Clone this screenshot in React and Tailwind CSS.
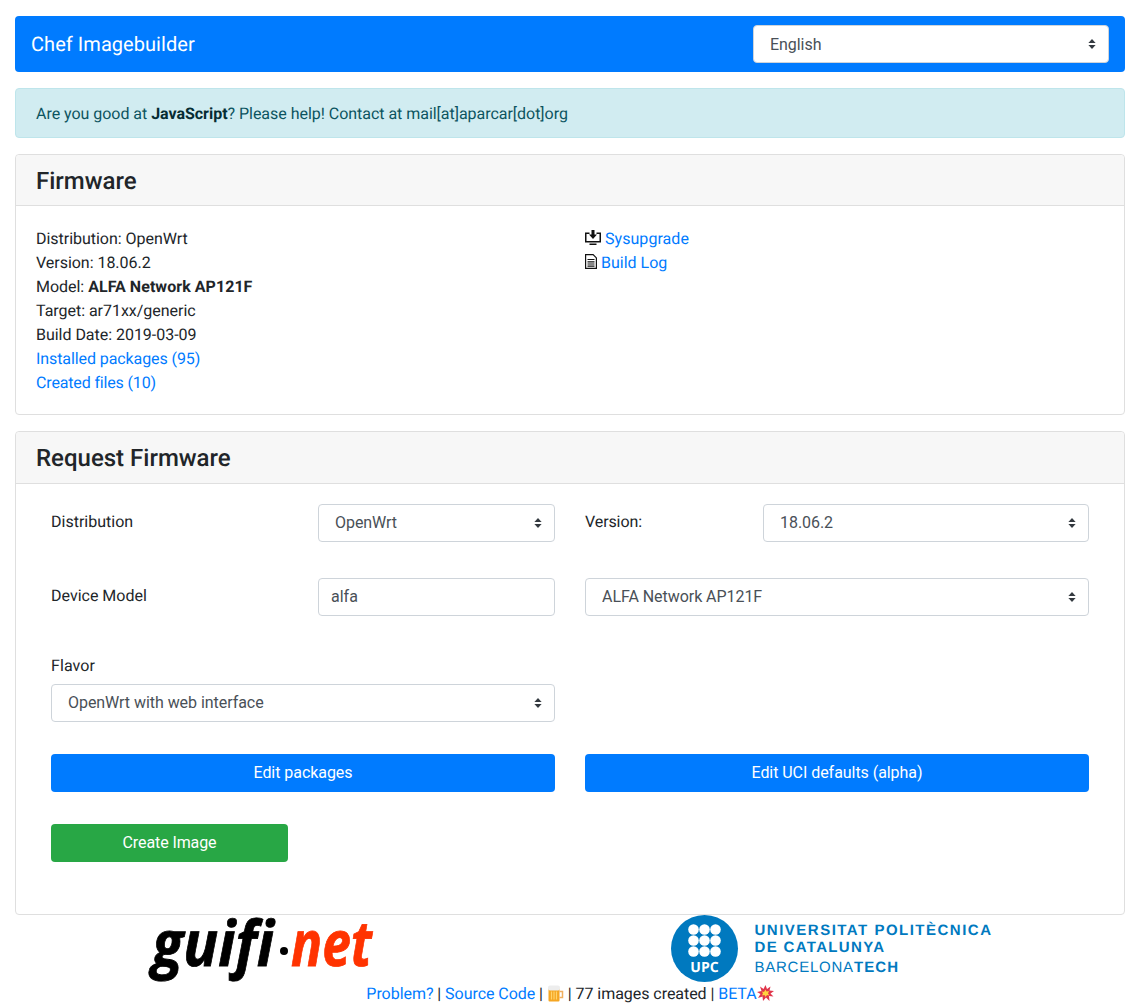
import React from 'react';

const Chevrons = () => (
  <svg width="8" height="10" viewBox="0 0 8 10" className="absolute right-[13px] top-1/2 -translate-y-1/2 pointer-events-none" fill="#343a40">
    <path d="M4 0 L7.6 4 L0.4 4 Z" />
    <path d="M4 10 L7.6 6 L0.4 6 Z" />
  </svg>
);

const Select = ({ value, className = '', selectClass = '' }) => (
  <div className={`relative ${className}`}>
    <select
      defaultValue={value}
      className={`block w-full h-[38px] appearance-none bg-white border border-[#ced4da] rounded pl-4 pr-8 text-base text-[#495057] tracking-[-0.05px] ${selectClass}`}
    >
      <option>{value}</option>
    </select>
    <Chevrons />
  </div>
);

const Card = ({ title, children, className = '', headerClass = 'pb-[9px]' }) => (
  <section className={`border border-[#dfdfdf] rounded ${className}`}>
    <h4 className={`bg-[#f7f7f7] border-b border-[#dfdfdf] rounded-t px-5 pt-3 text-2xl leading-[29px] font-medium text-[#212529] ${headerClass}`}>
      {title}
    </h4>
    {children}
  </section>
);

const SysupgradeIcon = () => (
  <svg width="16" height="15" viewBox="0 0 16 15" className="shrink-0 -mt-1" fill="#111">
    <path d="M6.500 0h3v4.500h2.500L8 9 4 4.500h2.500z" />
    <path d="M0 2.500h4.500V4H1.500v7h13V4h-3V2.500H16V12.500H0z" />
    <path d="M4.500 13.500h7V15h-7z" />
  </svg>
);

const LogIcon = () => (
  <svg width="12" height="15" viewBox="0 0 12 15" className="shrink-0 -mt-1" fill="none" stroke="#111" strokeWidth="1.200">
    <path d="M.6.6h7.500l3.300 3.300v10.500H.6z" />
    <path d="M2.500 5.500h7M2.500 7.800h7M2.500 10h7M2.500 12.200h7" />
  </svg>
);

const GuifiLogo = () => (
  <svg width="232" height="66" viewBox="0 0 232 66" className="shrink-0 overflow-visible">
    <text x="5" y="51" fontFamily="'Open Sans', sans-serif" fontWeight="700" fontStyle="italic" fontSize="63" textLength="122" lengthAdjust="spacingAndGlyphs" fill="#000" stroke="#000" strokeWidth="0.800">guifi</text>
    <circle cx="137" cy="36" r="4" fill="#000" />
    <text x="144" y="51" fontFamily="'Open Sans', sans-serif" fontWeight="700" fontStyle="italic" fontSize="63" textLength="81" lengthAdjust="spacingAndGlyphs" fill="#ff3300" stroke="#ff3300" strokeWidth="0.800">net</text>
  </svg>
);

const UpcLogo = () => {
  const dots = [];
  for (let r = 0; r < 3; r++) {
    for (let c = 0; c < 3; c++) {
      dots.push(<circle key={`${r}-${c}`} cx={22.500 + c * 11} cy={14.500 + r * 11} r="5.300" fill="#fff" />);
    }
  }
  return (
    <svg width="322" height="67" viewBox="0 0 322 67" className="shrink-0">
      <circle cx="33.500" cy="33.500" r="33.500" fill="#0079bf" />
      {dots}
      <text x="33.500" y="57" textAnchor="middle" fontFamily="'Open Sans', sans-serif" fontWeight="700" fontSize="14" fill="#fff">UPC</text>
      <g fontFamily="'Liberation Sans', sans-serif" fill="#0079bf">
        <text x="83.500" y="20" fontWeight="700" fontSize="15" textLength="236.500" lengthAdjust="spacing">UNIVERSITAT POLITÈCNICA</text>
        <text x="83.500" y="37" fontWeight="700" fontSize="15" textLength="129.500" lengthAdjust="spacing">DE CATALUNYA</text>
        <text x="83.500" y="57" fontSize="15" textLength="98.500" lengthAdjust="spacing">BARCELONA</text>
        <text x="183" y="57" fontWeight="700" fontSize="15" textLength="44" lengthAdjust="spacing">TECH</text>
      </g>
    </svg>
  );
};

const BeerIcon = () => (
  <svg width="17" height="17" viewBox="0 0 17 17" className="inline-block align-[-3px]">
    <rect x="1.500" y="3" width="11" height="13.500" rx="1" fill="#f5a623" />
    <path d="M4.500 6.500v8M7 6.500v8M9.500 6.500v8" stroke="#ffd36b" strokeWidth="1.200" />
    <rect x="1" y="0.500" width="12" height="5" rx="2" fill="#ededed" />
    <path d="M12.500 6.500h3v6h-3" fill="none" stroke="#f0b060" strokeWidth="1.500" />
  </svg>
);

const BoomIcon = () => (
  <svg width="17" height="17" viewBox="0 0 17 17" className="inline-block align-[-3px]">
    <path d="M8.500 0l1.500 4 3.500-2.500-1 4 4.500.5-3.500 2.500 3 3-4.500-.5.5 5-3.500-3.500-3 3.500-.5-4.500-4.500 1.500 2.500-4L0 7l4.500-1-1.500-4.500 3.500 2.500z" fill="#e0354b" />
    <path d="M8.500 4.500l1 2 2.500-.5-1 2.500 1.500 2-2.500-.5-1.500 2-1-2-2.500.5 1-2.500L4.500 6.500l2.500.5z" fill="#ffd23f" />
  </svg>
);

const linkClass = 'text-[#007bff]';

export default function App() {
  return (
    <div className="px-[15px] pt-4 font-['Roboto',sans-serif] text-base leading-6 text-[#212529] [text-rendering:geometricPrecision]">
      <nav className="flex items-center justify-between h-14 bg-[#007bff] rounded pl-4 pr-4">
        <span className="text-xl text-white tracking-[0.05px]">Chef Imagebuilder</span>
        <Select value="English" className="w-[356px]" selectClass="pt-0.5" />
      </nav>

      <div className="mt-4 h-[50px] flex items-center px-5 pt-0.5 bg-[#d1ecf1] border border-[#bee5eb] rounded text-[#0c5460] tracking-[-0.03px]">
        <span>Are you good at <b className="font-bold text-[#062c33]">JavaScript</b>? Please help! Contact at mail[at]aparcar[dot]org</span>
      </div>

      <Card title="Firmware" className="mt-4">
        <div className="grid grid-cols-2 gap-x-[30px] px-5 pt-[21px] pb-[19px]">
          <div className="tracking-[-0.03px]">
            <div>Distribution: OpenWrt</div>
            <div>Version: 18.06.2</div>
            <div>Model: <b className="font-bold tracking-[0.05px]">ALFA Network AP121F</b></div>
            <div>Target: ar71xx/generic</div>
            <div>Build Date: 2019-03-09</div>
            <div><a className={`${linkClass} tracking-[-0.09px]`}>Installed packages (95)</a></div>
            <div><a className={`${linkClass} tracking-[-0.15px]`}>Created files (10)</a></div>
          </div>
          <div>
            <div className="flex items-center gap-1"><SysupgradeIcon /><a className={`${linkClass} tracking-[0.05px]`}>Sysupgrade</a></div>
            <div className="flex items-center gap-1"><LogIcon /><a className={linkClass}>Build Log</a></div>
          </div>
        </div>
      </Card>

      <Card title="Request Firmware" className="mt-4" headerClass="pb-2.5">
        <div className="px-[35px] pt-5 pb-[52px]">
          <div className="grid grid-cols-2 gap-x-[30px]">
            <div className="flex">
              <label className="w-[267px] pt-[6px]">Distribution</label>
              <Select value="OpenWrt" className="flex-1" />
            </div>
            <div className="flex">
              <label className="w-[178px] pt-[6px] tracking-[-0.1px]">Version:</label>
              <Select value="18.06.2" className="flex-1" />
            </div>
          </div>

          <div className="grid grid-cols-2 gap-x-[30px] mt-9">
            <div className="flex">
              <label className="w-[267px] pt-[6px]">Device Model</label>
              <input
                defaultValue="alfa"
                className="flex-1 min-w-0 h-[38px] border border-[#ced4da] rounded px-3 pb-px text-base text-[#495057]"
              />
            </div>
            <Select value="ALFA Network AP121F" />
          </div>

          <div className="grid grid-cols-2 gap-x-[30px] mt-[38px]">
            <div>
              <label className="block mb-[6px] tracking-[0.1px]">Flavor</label>
              <Select value="OpenWrt with web interface" />
            </div>
          </div>

          <div className="grid grid-cols-2 gap-x-[30px] mt-8">
            <button className="h-[38px] bg-[#007bff] rounded text-white tracking-[-0.05px]">Edit packages</button>
            <button className="h-[38px] bg-[#007bff] rounded text-white tracking-[-0.05px]">Edit UCI defaults (alpha)</button>
          </div>

          <button className="block mt-8 w-[237px] h-[38px] bg-[#28a745] rounded text-white tracking-[-0.1px]">Create Image</button>
        </div>
      </Card>

      <div className="flex pl-[132px] gap-[292px] h-[67px]">
        <GuifiLogo />
        <UpcLogo />
      </div>
      <div className="text-center tracking-[-0.05px]">
        <a className={linkClass}>Problem?</a> | <a className={linkClass}>Source Code</a> | <BeerIcon /> | 77 images created | <a className={linkClass}>BETA</a><BoomIcon />
      </div>
    </div>
  );
}
